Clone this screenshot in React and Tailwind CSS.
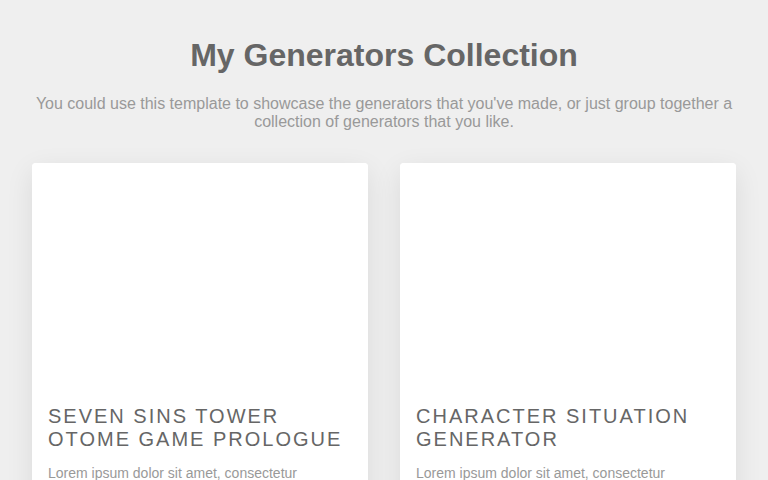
const generators = [
  {
    title: "Seven Sins Tower Otome Game Prologue",
    text: "Lorem ipsum dolor sit amet, consectetur adipiscing elit, sed do eiusmod tempor incididunt ut labore et dolore magna aliqua.",
  },
  {
    title: "Character Situation Generator",
    text: "Lorem ipsum dolor sit amet, consectetur adipiscing elit, sed do eiusmod tempor incididunt ut labore et dolore magna aliqua.",
  },
];

const Card = ({ title, text }) => (
  <div className="bg-white rounded-[4px] shadow-[0_8px_28px_rgba(0,0,0,0.09)] overflow-hidden">
    <div className="h-[226px] bg-white" />
    <div className="px-4 pt-4 pb-6">
      <h2 className="text-[20px] leading-[23px] uppercase tracking-[2px] text-[#666]">
        {title}
      </h2>
      <p className="mt-[12px] text-[14px] leading-[20px] text-[#999]">{text}</p>
    </div>
  </div>
);

const App = () => {
  return (
    <main className="min-h-screen bg-[#efefef] font-['Liberation_Sans',Arial,sans-serif] px-8 pt-[37px] pb-10">
      <h1 className="text-center text-[32px] leading-[37px] font-bold text-[#666]">
        My Generators Collection
      </h1>
      <p className="mt-[21px] text-center text-[16px] leading-[18px] text-[#999]">
        You could use this template to showcase the generators that you've
        made, or just group together a collection of generators that you like.
      </p>
      <div className="mt-8 grid grid-cols-2 gap-8">
        {generators.map((g) => (
          <Card key={g.title} title={g.title} text={g.text} />
        ))}
      </div>
    </main>
  );
};

export default App;
